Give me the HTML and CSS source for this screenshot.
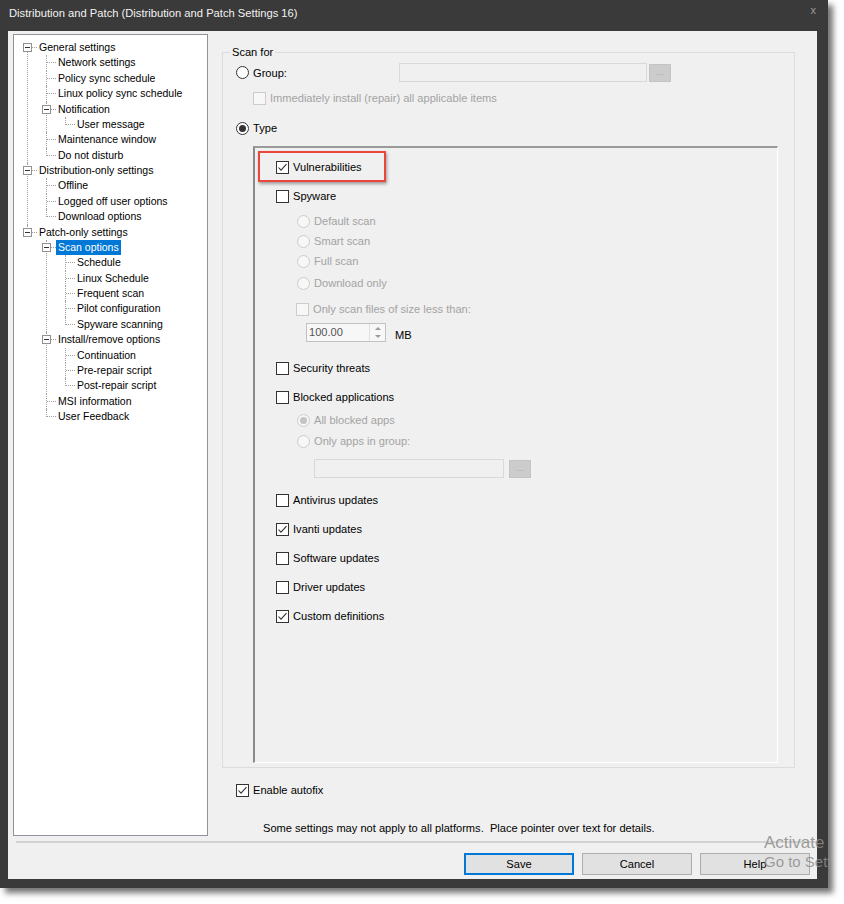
FILE: index.html
```html
<!DOCTYPE html>
<html>
<head>
<meta charset="utf-8">
<link rel="stylesheet" href="styles.css">
</head>
<body>
<div class="window">
  <div class="titlebar">
    <span class="title">Distribution and Patch (Distribution and Patch Settings 16)</span>
    <span class="close">x</span>
  </div>
  <div class="client">
    <div class="main">
      <div class="tree-panel">
        <ul class="tree">
          <li><div class="node"><span class="exp"></span><span class="label">General settings</span></div>
            <ul>
              <li><div class="node"><span class="label">Network settings</span></div></li>
              <li><div class="node"><span class="label">Policy sync schedule</span></div></li>
              <li><div class="node"><span class="label">Linux policy sync schedule</span></div></li>
              <li><div class="node"><span class="exp"></span><span class="label">Notification</span></div>
                <ul>
                  <li><div class="node"><span class="label">User message</span></div></li>
                </ul>
              </li>
              <li><div class="node"><span class="label">Maintenance window</span></div></li>
              <li><div class="node"><span class="label">Do not disturb</span></div></li>
            </ul>
          </li>
          <li><div class="node"><span class="exp"></span><span class="label">Distribution-only settings</span></div>
            <ul>
              <li><div class="node"><span class="label">Offline</span></div></li>
              <li><div class="node"><span class="label">Logged off user options</span></div></li>
              <li><div class="node"><span class="label">Download options</span></div></li>
            </ul>
          </li>
          <li><div class="node"><span class="exp"></span><span class="label">Patch-only settings</span></div>
            <ul>
              <li><div class="node"><span class="exp"></span><span class="label selected">Scan options</span></div>
                <ul>
                  <li><div class="node"><span class="label">Schedule</span></div></li>
                  <li><div class="node"><span class="label">Linux Schedule</span></div></li>
                  <li><div class="node"><span class="label">Frequent scan</span></div></li>
                  <li><div class="node"><span class="label">Pilot configuration</span></div></li>
                  <li><div class="node"><span class="label">Spyware scanning</span></div></li>
                </ul>
              </li>
              <li><div class="node"><span class="exp"></span><span class="label">Install/remove options</span></div>
                <ul>
                  <li><div class="node"><span class="label">Continuation</span></div></li>
                  <li><div class="node"><span class="label">Pre-repair script</span></div></li>
                  <li><div class="node"><span class="label">Post-repair script</span></div></li>
                </ul>
              </li>
              <li><div class="node"><span class="label">MSI information</span></div></li>
              <li><div class="node"><span class="label">User Feedback</span></div></li>
            </ul>
          </li>
        </ul>
      </div>

      <div class="content">
        <fieldset class="scanfor">
          <legend>Scan for</legend>
          <div class="scanfor-body">
            <div class="row group-row">
              <span class="rb"></span><span class="lbl group-lbl">Group:</span>
              <span class="field group-field"></span><span class="browse">...</span>
            </div>
            <div class="row install-row">
              <span class="cb disabled"></span><span class="lbl dim">Immediately install (repair) all applicable items</span>
            </div>
            <div class="row type-row">
              <span class="rb checked"></span><span class="lbl">Type</span>
            </div>
            <div class="type-panel">
              <div class="row opt first">
                <span class="highlight">
                  <span class="cb checked"><svg viewBox="0 0 11 11" width="11" height="11"><polyline points="1.5,5.5 4,8.2 9.5,2.2" fill="none" stroke="#333" stroke-width="1.1"/></svg></span><span class="lbl">Vulnerabilities</span>
                </span>
              </div>
              <div class="row opt"><span class="cb"></span><span class="lbl">Spyware</span></div>
              <div class="row opt sub mt9"><span class="rb disabled"></span><span class="lbl dim">Default scan</span></div>
              <div class="row opt sub mt4"><span class="rb disabled"></span><span class="lbl dim">Smart scan</span></div>
              <div class="row opt sub mt4"><span class="rb disabled"></span><span class="lbl dim">Full scan</span></div>
              <div class="row opt sub mt6"><span class="rb disabled"></span><span class="lbl dim">Download only</span></div>
              <div class="row opt sub2 mt10"><span class="cb disabled"></span><span class="lbl dim">Only scan files of size less than:</span></div>
              <div class="row spin-row">
                <span class="spin"><span class="spin-value">100.00</span><span class="spin-arrows"><span class="up"></span><span class="down"></span></span></span>
                <span class="unit">MB</span>
              </div>
              <div class="row opt mt18"><span class="cb"></span><span class="lbl">Security threats</span></div>
              <div class="row opt"><span class="cb"></span><span class="lbl">Blocked applications</span></div>
              <div class="row opt sub mt7"><span class="rb disabled checked"></span><span class="lbl dim">All blocked apps</span></div>
              <div class="row opt sub mt5"><span class="rb disabled"></span><span class="lbl dim">Only apps in group:</span></div>
              <div class="row apps-row">
                <span class="field apps-field"></span><span class="browse">...</span>
              </div>
              <div class="row opt mt14"><span class="cb"></span><span class="lbl">Antivirus updates</span></div>
              <div class="row opt"><span class="cb checked"><svg viewBox="0 0 11 11" width="11" height="11"><polyline points="1.5,5.5 4,8.2 9.5,2.2" fill="none" stroke="#333" stroke-width="1.1"/></svg></span><span class="lbl">Ivanti updates</span></div>
              <div class="row opt"><span class="cb"></span><span class="lbl">Software updates</span></div>
              <div class="row opt"><span class="cb"></span><span class="lbl">Driver updates</span></div>
              <div class="row opt"><span class="cb checked"><svg viewBox="0 0 11 11" width="11" height="11"><polyline points="1.5,5.5 4,8.2 9.5,2.2" fill="none" stroke="#333" stroke-width="1.1"/></svg></span><span class="lbl">Custom definitions</span></div>
            </div>
          </div>
        </fieldset>

        <div class="row autofix">
          <span class="cb checked"><svg viewBox="0 0 11 11" width="11" height="11"><polyline points="1.5,5.5 4,8.2 9.5,2.2" fill="none" stroke="#333" stroke-width="1.1"/></svg></span><span class="lbl">Enable autofix</span>
        </div>
        <p class="note">Some settings may not apply to all platforms.&nbsp; Place pointer over text for details.</p>
      </div>
    </div>

    <div class="separator"></div>

    <div class="buttons">
      <button class="btn default">Save</button>
      <button class="btn">Cancel</button>
      <button class="btn">Help</button>
    </div>

    <div class="watermark">
      <div class="wm-1">Activate</div>
      <div class="wm-2">Go to Sett</div>
    </div>
  </div>
</div>
</body>
</html>
```

FILE: styles.css
```css
html, body {
  margin: 0;
  padding: 0;
  background: #ffffff;
}

body {
  font-family: "Liberation Sans", Arial, sans-serif;
  width: 844px;
  height: 904px;
  overflow: hidden;
}

.window {
  position: relative;
  width: 828px;
  height: 888px;
  background: #3a3a3a;
  box-shadow: 5px 5px 6px rgba(0, 0, 0, 0.55);
}

.titlebar {
  height: 31px;
  display: flex;
  align-items: flex-start;
  justify-content: space-between;
  color: #f2f2f2;
}

.title {
  font-size: 11.2px;
  line-height: 14px;
  margin: 6px 0 0 9px;
  white-space: nowrap;
}

.close {
  font-size: 11px;
  line-height: 12px;
  color: #9a9a9a;
  margin: 4px 12px 0 0;
}

.client {
  position: relative;
  margin-left: 8px;
  width: 809px;
  height: 848px;
  background: #f0f0f0;
  box-sizing: border-box;
  padding-top: 3px;
  font-size: 11.1px;
  color: #000;
}

.main {
  display: flex;
  align-items: flex-start;
  height: 802px;
}

/* ---------- tree ---------- */
.tree-panel {
  margin-left: 5px;
  width: 195px;
  height: 802px;
  box-sizing: border-box;
  border: 1px solid #8f949c;
  background: #ffffff;
  font-size: 10.5px;
  flex: none;
}

.tree, .tree ul {
  list-style: none;
  margin: 0;
  padding: 0;
}

.tree {
  padding: 5px 0 0 13px;
}

.tree ul {
  padding-left: 19px;
}

.tree li {
  position: relative;
}

.tree li::before {
  content: "";
  position: absolute;
  left: 0;
  top: 0;
  bottom: 0;
  border-left: 1px dotted #a0a0a0;
}

.tree li:last-child::before {
  bottom: auto;
  height: 8px;
}

.tree > li:first-child::before {
  top: 8px;
}

.node {
  position: relative;
  height: 15.375px;
  padding-left: 10px;
  white-space: nowrap;
}

.node::before {
  content: "";
  position: absolute;
  left: 1px;
  top: 7px;
  width: 9px;
  border-top: 1px dotted #a0a0a0;
}

.exp {
  position: absolute;
  left: -4px;
  top: 3px;
  width: 9px;
  height: 9px;
  box-sizing: border-box;
  border: 1px solid #919191;
  background: #ffffff;
  z-index: 1;
}

.exp::after {
  content: "";
  position: absolute;
  left: 1px;
  top: 3px;
  width: 5px;
  height: 1px;
  background: #333;
}

.label {
  display: inline-block;
  height: 15px;
  line-height: 15px;
  padding: 0 2px;
  color: #000;
}

.label.selected {
  background: #0078d7;
  color: #ffffff;
}

/* ---------- content ---------- */
.content {
  margin-left: 14px;
  width: 573px;
  flex: none;
}

.scanfor {
  margin: 11px 0 0 0;
  padding: 0;
  border: 1px solid #dcdcdc;
  min-width: 0;
}

.scanfor legend {
  margin-left: 7px;
  padding: 0 2px;
  line-height: 14px;
  font-size: 11.1px;
}

.scanfor-body {
  padding: 0 15px 4px 13px;
}

.row {
  display: flex;
  align-items: center;
  height: 16px;
  white-space: nowrap;
}

.lbl {
  margin-left: 4px;
  line-height: 14px;
}

.dim {
  color: #a3a3a3;
}

/* checkbox */
.cb {
  display: inline-flex;
  align-items: center;
  justify-content: center;
  width: 13px;
  height: 13px;
  box-sizing: border-box;
  border: 1px solid #333333;
  background: #ffffff;
  flex: none;
}

.cb svg {
  display: block;
}

.cb.disabled {
  border-color: #cccccc;
  background: #f7f7f7;
}

/* radio */
.rb {
  position: relative;
  width: 13px;
  height: 13px;
  box-sizing: border-box;
  border: 1px solid #333333;
  border-radius: 50%;
  background: #ffffff;
  flex: none;
}

.rb.checked::after {
  content: "";
  position: absolute;
  left: 2px;
  top: 2px;
  width: 7px;
  height: 7px;
  border-radius: 50%;
  background: #333333;
}

.rb.disabled {
  border-color: #cccccc;
  background: #f7f7f7;
}

.rb.disabled.checked::after {
  background: #c4c4c4;
}

.field {
  box-sizing: border-box;
  height: 19px;
  border: 1px solid #d9d9d9;
  background: #f0f0f0;
  flex: none;
}

.browse {
  box-sizing: border-box;
  width: 22px;
  height: 18px;
  margin-left: 2px;
  background: #cccccc;
  border: 1px solid #c4c4c4;
  color: #a8a8a8;
  font-size: 9px;
  line-height: 14px;
  text-align: center;
  flex: none;
}

.group-row {
  margin-top: 4px;
  height: 19px;
}

.group-lbl {
  width: 146px;
}

.group-field {
  width: 248px;
}

.install-row {
  margin-top: 8px;
  padding-left: 17px;
}

.type-row {
  margin-top: 14px;
}

.type-panel {
  margin: 10px 0 0 17px;
  width: 525px;
  height: 617px;
  box-sizing: border-box;
  border-style: solid;
  border-width: 2px 1px 1px 2px;
  border-color: #9a9a9a #ffffff #ffffff #8a8a8a;
  padding-left: 21px;
  padding-top: 0;
  overflow: visible;
}

.opt {
  margin-top: 13px;
}

.opt.first {
  margin-top: 11px;
}

.sub {
  padding-left: 21px;
}

.sub2 {
  padding-left: 20px;
}

.mt4 { margin-top: 4px; }
.mt5 { margin-top: 5px; }
.mt6 { margin-top: 6px; }
.mt7 { margin-top: 7px; }
.mt9 { margin-top: 9px; }
.mt10 { margin-top: 10px; }
.mt14 { margin-top: 14px; }
.mt18 { margin-top: 18px; }

.highlight {
  position: relative;
  display: inline-flex;
  align-items: center;
}

.highlight::after {
  content: "";
  position: absolute;
  left: -18px;
  right: -24px;
  top: -9px;
  bottom: -8px;
  border: 2.5px solid #e9463c;
  box-shadow: 1px 2px 3px rgba(0, 0, 0, 0.35);
}

.spin-row {
  margin-top: 6px;
  height: 19px;
  padding-left: 30px;
  align-items: flex-end;
}

.spin {
  display: flex;
  box-sizing: border-box;
  width: 80px;
  height: 19px;
  border: 1px solid #c2c2c2;
  background: #f7f7f7;
}

.spin-value {
  flex: 1;
  padding-left: 2px;
  line-height: 17px;
  color: #555555;
}

.spin-arrows {
  width: 15px;
  display: flex;
  flex-direction: column;
  border-left: 1px solid #e0e0e0;
}

.spin-arrows .up,
.spin-arrows .down {
  flex: 1;
  display: flex;
  align-items: center;
  justify-content: center;
}

.spin-arrows .up::after {
  content: "";
  border-left: 3px solid transparent;
  border-right: 3px solid transparent;
  border-bottom: 3px solid #9a9a9a;
}

.spin-arrows .down::after {
  content: "";
  border-left: 3px solid transparent;
  border-right: 3px solid transparent;
  border-top: 3px solid #9a9a9a;
}

.unit {
  margin-left: 9px;
  line-height: 14px;
  margin-bottom: 0;
}

.apps-row {
  margin-top: 10px;
  height: 19px;
  padding-left: 38px;
}

.apps-field {
  width: 190px;
}

.apps-row .browse {
  margin-left: 5px;
}

.autofix {
  margin-top: 14px;
  padding-left: 14px;
}

.note {
  margin: 23px 0 0 41px;
  line-height: 14px;
  white-space: nowrap;
}

/* ---------- bottom ---------- */
.separator {
  margin: 5px 0 0 8px;
  height: 2px;
  background: #d2d2d2;
}

.buttons {
  display: flex;
  justify-content: flex-end;
  gap: 8px;
  margin-top: 10px;
  padding-right: 7px;
}

.btn {
  width: 110px;
  height: 22px;
  box-sizing: border-box;
  border: 1px solid #adadad;
  background: #e1e1e1;
  font-family: "Liberation Sans", Arial, sans-serif;
  font-size: 11.1px;
  color: #000;
  padding: 0;
}

.btn.default {
  border: 2px solid #0078d7;
}

.watermark {
  position: absolute;
  left: 756px;
  top: 802px;
  color: rgba(140, 140, 140, 0.85);
  white-space: nowrap;
  pointer-events: none;
}

.wm-1 {
  font-size: 17px;
  line-height: 20px;
}

.wm-2 {
  font-size: 15px;
  line-height: 18px;
}
```
